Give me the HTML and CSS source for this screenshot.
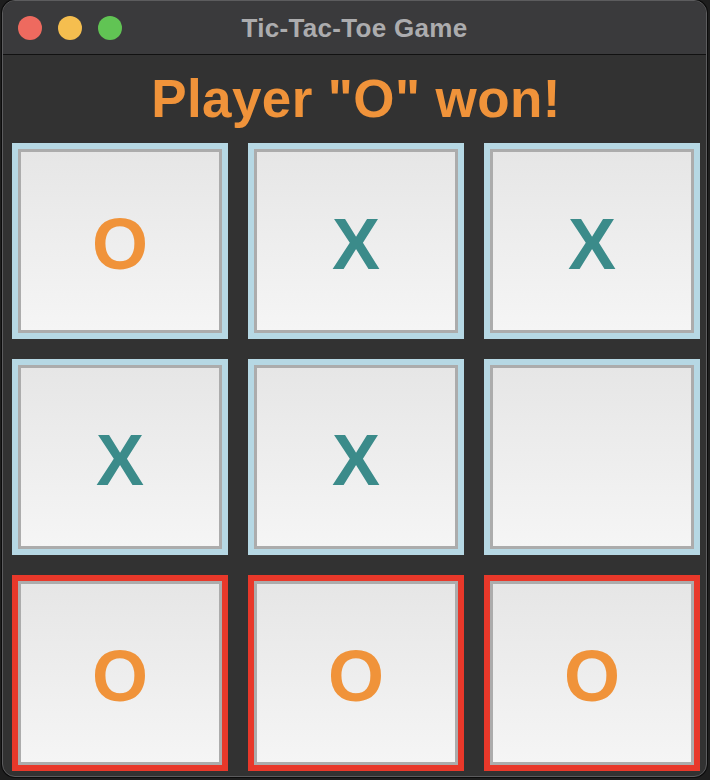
FILE: index.html
```html
<!DOCTYPE html>
<html>
<head>
<meta charset="utf-8">
<title>Tic-Tac-Toe Game</title>
<link rel="stylesheet" href="styles.css">
</head>
<body>
<div class="window">
  <div class="titlebar">
    <div class="lights">
      <span class="light red"></span>
      <span class="light yellow"></span>
      <span class="light green"></span>
    </div>
    <div class="title">Tic-Tac-Toe Game</div>
    <div class="spacer"></div>
  </div>
  <div class="content">
    <h1 class="status">Player "O" won!</h1>
    <div class="board">
      <div class="cell"><div class="face o">O</div></div>
      <div class="cell"><div class="face x">X</div></div>
      <div class="cell"><div class="face x">X</div></div>
      <div class="cell"><div class="face x">X</div></div>
      <div class="cell"><div class="face x">X</div></div>
      <div class="cell"><div class="face"></div></div>
      <div class="cell win"><div class="face o">O</div></div>
      <div class="cell win"><div class="face o">O</div></div>
      <div class="cell win"><div class="face o">O</div></div>
    </div>
  </div>
</div>
</body>
</html>
```

FILE: styles.css
```css
html, body {
  margin: 0;
  padding: 0;
  background: #1e1e1e;
  width: 710px;
  height: 780px;
  overflow: hidden;
  font-family: "Liberation Sans", Arial, sans-serif;
}

.window {
  box-sizing: border-box;
  width: 705px;
  height: 777px;
  margin-left: 2px;
  border: 1px solid #5c5c5e;
  border-radius: 13px;
  background: #323232;
  overflow: hidden;
  box-shadow: 0 0 0 1px #0c0c0c;
}

.titlebar {
  height: 53px;
  background: #3a3a3c;
  border-bottom: 1px solid #111111;
  display: grid;
  grid-template-columns: 1fr auto 1fr;
  align-items: center;
}

.lights {
  display: flex;
  gap: 16px;
  padding-left: 15px;
  align-items: center;
}

.light {
  width: 24px;
  height: 24px;
  border-radius: 50%;
  display: block;
}

.red { background: #ee6a5f; }
.yellow { background: #f5be4f; }
.green { background: #61c454; }

.title {
  color: #acacae;
  font-size: 26px;
  font-weight: bold;
  line-height: 50px;
  letter-spacing: 0.3px;
}

.content {
  padding: 0 6px 0 9px;
}

.status {
  margin: 0;
  height: 88px;
  line-height: 88px;
  text-align: center;
  font-size: 53px;
  font-weight: bold;
  letter-spacing: 0.4px;
  color: #f0933a;
}

.board {
  display: grid;
  grid-template-columns: repeat(3, 216px);
  grid-template-rows: repeat(3, 196px);
  gap: 20px;
}

.cell {
  box-sizing: border-box;
  border: 6px solid #b6d8e4;
  display: flex;
}

.cell.win {
  border-color: #e8382a;
}

.face {
  flex: 1;
  border: 3px solid #acacac;
  background: linear-gradient(to bottom, #e6e6e6, #f5f5f5);
  display: flex;
  align-items: center;
  justify-content: center;
  padding-top: 5px;
  font-size: 72px;
  font-weight: bold;
  line-height: 1;
}

.face.o { color: #f0933a; }
.face.x { color: #3b8b8a; }
```
